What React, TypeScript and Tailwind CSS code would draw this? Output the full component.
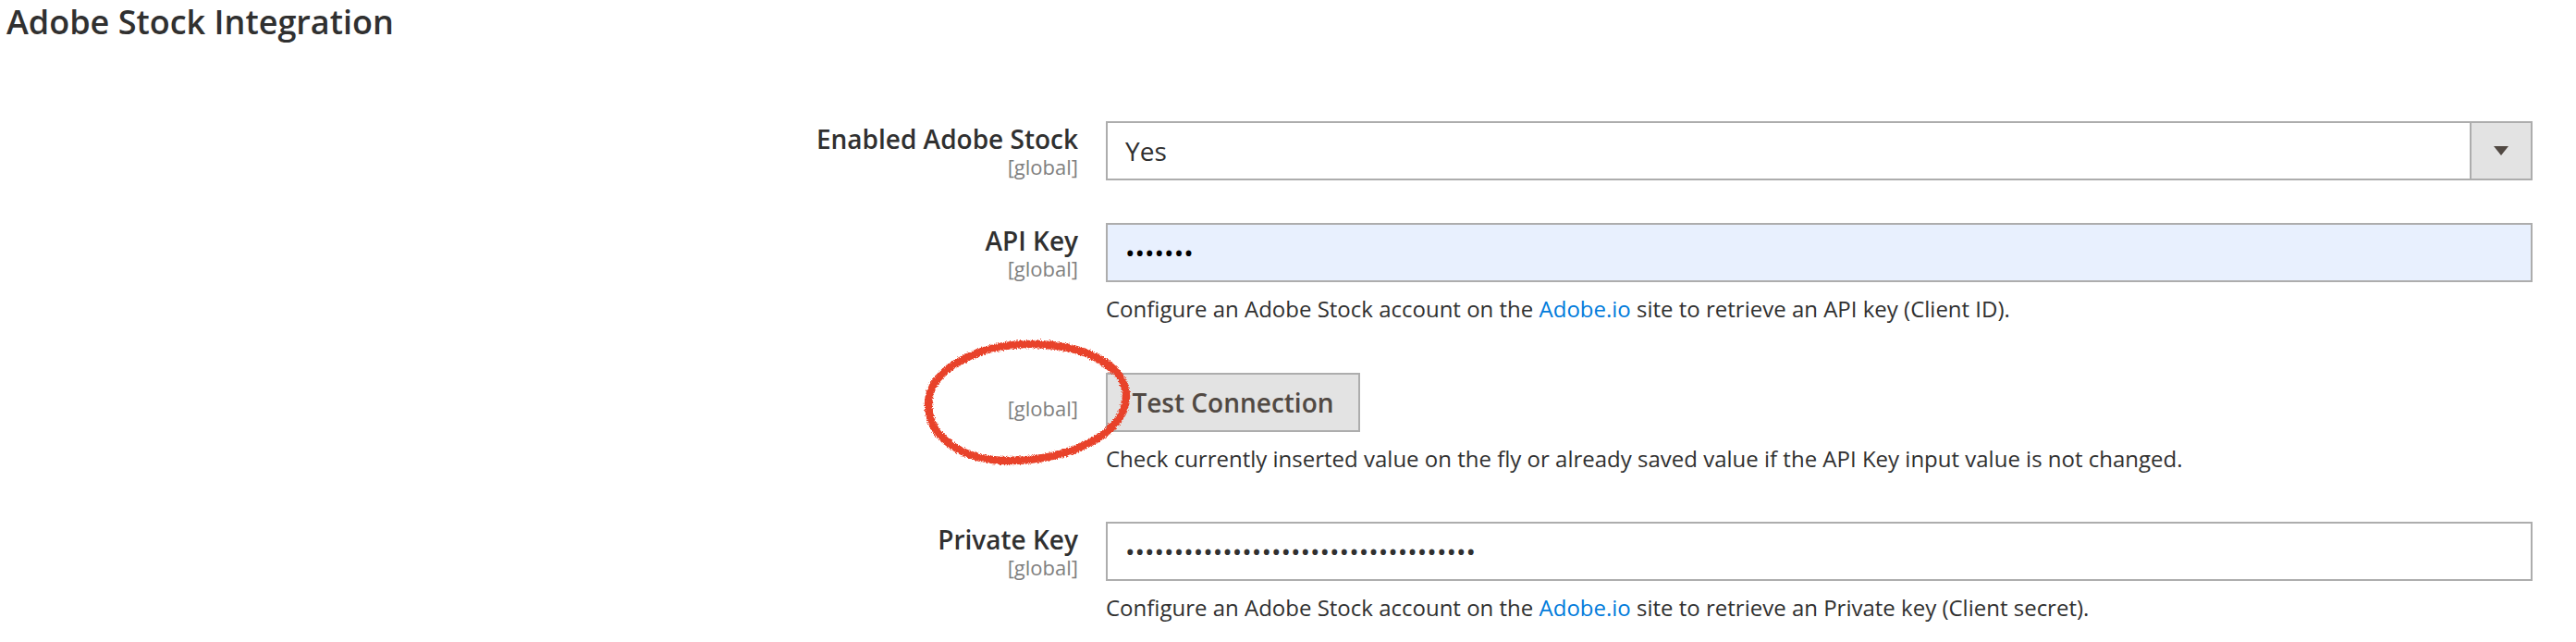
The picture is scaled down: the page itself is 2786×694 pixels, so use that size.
import React from "react";

type FieldRowProps = {
  label?: string;
  note?: React.ReactNode;
  className?: string;
  children: React.ReactNode;
};

// One config row: label + scope on the left, control + optional note on the right
function FieldRow({ label, note, className, children }: FieldRowProps) {
  return (
    <div className={`grid grid-cols-[1166px_1543px] gap-x-[30px] ${className ?? ""}`}>
      <div className="text-right">
        {label ? (
          <div className="pt-[2px] text-[28px] font-semibold leading-[34px] text-[#303030]">{label}</div>
        ) : (
          <div className="h-[25px]" />
        )}
        <div className="text-[22px] leading-[26px] text-[#808080]">[global]</div>
      </div>
      <div>
        {children}
        {note ? <p className="mt-[13px] text-[24px] leading-[32px] text-[#303030]">{note}</p> : null}
      </div>
    </div>
  );
}

function AdobeLink() {
  return (
    <a href="#" className="text-[#007bdb]">
      Adobe.io
    </a>
  );
}

function FakeSelect({ value }: { value: string }) {
  return (
    <div className="flex h-[64px] w-full border-2 border-[#adadad] bg-white">
      <div className="flex flex-1 items-center px-[19px] text-[28px] text-[#303030]">{value}</div>
      <div className="flex w-[66px] items-center justify-center border-l-2 border-[#adadad] bg-[#e3e3e3]">
        <svg width="16" height="10" viewBox="0 0 16 10" aria-hidden>
          <polygon points="0,0 16,0 8,10" fill="#514943" />
        </svg>
      </div>
    </div>
  );
}

function PasswordInput({ value, autofilled }: { value: string; autofilled?: boolean }) {
  return (
    <input
      type="password"
      readOnly
      value={value}
      className={`block h-[64px] w-full border-2 border-[#adadad] px-[19px] font-['Open_Sans',sans-serif] text-[28px] outline-none ${
        autofilled ? "bg-[#e8f0fe] text-black" : "bg-white text-[#303030]"
      }`}
    />
  );
}

// hand-drawn annotation ring over the scope label
function RedCircle() {
  return (
    <svg
      className="pointer-events-none absolute left-[990px] top-[360px]"
      width="245"
      height="155"
      viewBox="0 0 245 155"
      aria-hidden
    >
      <defs>
        <filter id="rough" x="-10%" y="-10%" width="120%" height="120%">
          <feTurbulence type="fractalNoise" baseFrequency="1.4" numOctaves="2" seed="7" result="noise" />
          <feDisplacementMap in="SourceGraphic" in2="noise" scale="5" xChannelSelector="R" yChannelSelector="G" />
        </filter>
      </defs>
      <path
        d="M 125 12 C 185 12 228 36 228 68 C 228 110 165 138 100 138 C 50 138 14 112 14 77 C 14 38 70 12 125 12 C 165 12 195 22 214 40"
        fill="none"
        stroke="#e8432a"
        strokeWidth="8.5"
        strokeLinecap="round"
        filter="url(#rough)"
      />
    </svg>
  );
}

export default function App() {
  return (
    <div className="relative min-h-[694px] w-[2786px] bg-white font-['Open_Sans',sans-serif]">
      <h2 className="pl-[7px] pt-[2px] text-[36px] font-semibold leading-[44px] text-[#303030]">
        Adobe Stock Integration
      </h2>

      <FieldRow label="Enabled Adobe Stock" className="mt-[85px]">
        <FakeSelect value="Yes" />
      </FieldRow>

      <FieldRow
        label="API Key"
        className="mt-[46px]"
        note={
          <>
            Configure an Adobe Stock account on the <AdobeLink /> site to retrieve an API key (Client ID).
          </>
        }
      >
        <PasswordInput value="1234567" autofilled />
      </FieldRow>

      <FieldRow
        className="mt-[53px]"
        note="Check currently inserted value on the fly or already saved value if the API Key input value is not changed."
      >
        <button
          type="button"
          className="flex h-[64px] w-[275px] items-center justify-center border-2 border-[#adadad] bg-[#e3e3e3] text-[28px] font-semibold text-[#514943]"
        >
          Test Connection
        </button>
      </FieldRow>

      <FieldRow
        label="Private Key"
        className="mt-[52px]"
        note={
          <>
            Configure an Adobe Stock account on the <AdobeLink /> site to retrieve an Private key (Client secret).
          </>
        }
      >
        <PasswordInput value="123456789012345678901234567890123456" />
      </FieldRow>

      <RedCircle />
    </div>
  );
}
